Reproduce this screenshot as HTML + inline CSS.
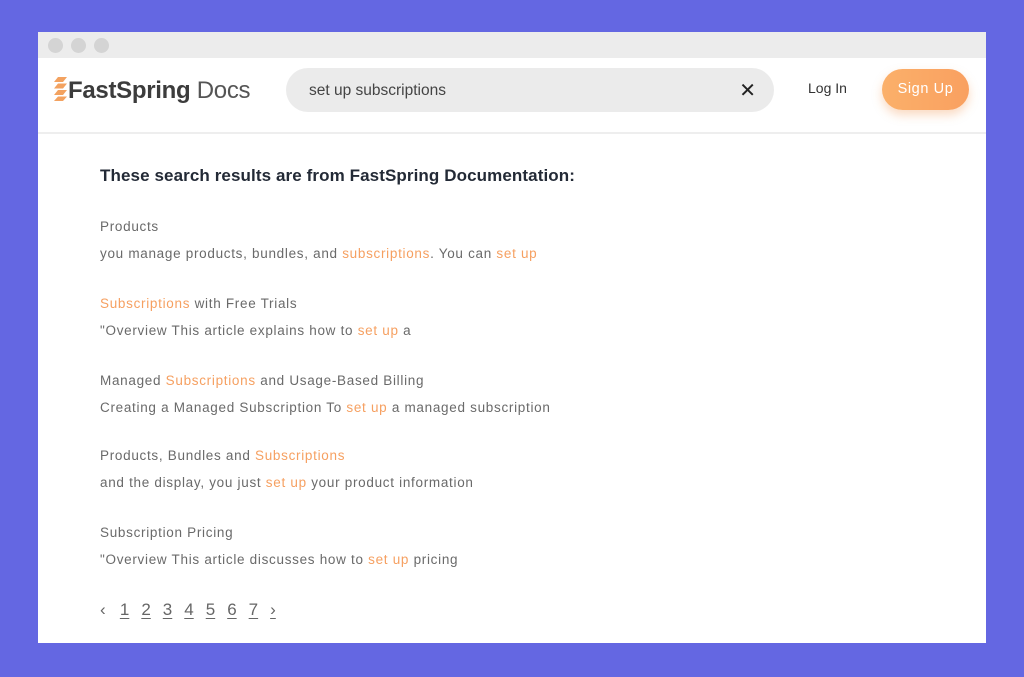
<!DOCTYPE html>
<html><head><meta charset="utf-8"><style>
*{margin:0;padding:0;box-sizing:border-box}
body{width:1024px;height:677px;background:#6467e2;font-family:"Liberation Sans",sans-serif;position:relative;overflow:hidden}
.win{position:absolute;left:38px;top:32px;width:948px;height:611px;background:#fff}
.tb{height:26px;background:#ececec;position:relative}
.dot{position:absolute;top:6px;width:15px;height:15px;border-radius:50%;background:#d4d4d4}
.hdr{height:76px;border-bottom:2px solid #eeeeee;position:relative;background:#fff}
.logo{position:absolute;left:16px;top:19px;font-size:24px;color:#3c3c3c;letter-spacing:-0.3px}
.logo b{font-weight:bold}
.logo span{font-weight:normal;color:#555}
.search{position:absolute;left:248px;top:10px;width:488px;height:44px;border-radius:22px;background:#ebebeb;font-size:15.5px;color:#444;padding:14px 0 0 23px}
.x{position:absolute;right:18px;top:10px;font-size:20px;color:#222}
.login{position:absolute;left:770px;top:22px;font-size:14px;color:#333}
.sign{position:absolute;left:844px;top:11px;width:87px;height:41px;border-radius:21px;background:linear-gradient(90deg,#fbb06a,#f9a060);color:#fff;font-size:14.5px;letter-spacing:.6px;text-align:center;line-height:41px;box-shadow:0 5px 10px rgba(240,150,80,.35)}
.c{position:absolute;left:62px;top:101px;color:#6a6a6a;font-size:13.5px;letter-spacing:.7px}
h1{font-size:17px;color:#232a36;font-weight:bold;position:absolute;top:0;white-space:nowrap;letter-spacing:.1px}
.t{position:absolute;white-space:nowrap}
.o{color:#f6a061}
.pg{position:absolute;font-size:17px;color:#666;white-space:nowrap;letter-spacing:0}
.pg u{margin-right:12px;text-underline-offset:3px}
</style></head><body>
<div class="win">
<div class="tb"><div class="dot" style="left:10px"></div><div class="dot" style="left:33px"></div><div class="dot" style="left:56px"></div></div>
<div class="hdr">
<div class="logo"><svg width="13" height="24" viewBox="0 0 13 24" style="vertical-align:-3px;margin-right:1px"><g fill="#f3a260"><path d="M4 0h9l-4 5H0z"/><path d="M4 6.5h9l-4 5H0z"/><path d="M4 13h9l-4 5H0z"/><path d="M4 19.5h9l-4 4.5H0z"/></g></svg><b>FastSpring</b> <span>Docs</span></div>
<div class="search">set up subscriptions<span class="x">✕</span></div>
<div class="login">Log In</div>
<div class="sign">Sign Up</div>
</div>
<div class="c">
<h1 style="top:33px">These search results are from FastSpring Documentation:</h1>
<div class="t" style="top:86px">Products</div>
<div class="t" style="top:113px">you manage products, bundles, and <span class="o">subscriptions</span>. You can <span class="o">set up</span></div>
<div class="t" style="top:163px"><span class="o">Subscriptions</span> with Free Trials</div>
<div class="t" style="top:190px">"Overview This article explains how to <span class="o">set up</span> a</div>
<div class="t" style="top:240px">Managed <span class="o">Subscriptions</span> and Usage-Based Billing</div>
<div class="t" style="top:267px">Creating a Managed Subscription To <span class="o">set up</span> a managed subscription</div>
<div class="t" style="top:315px">Products, Bundles and <span class="o">Subscriptions</span></div>
<div class="t" style="top:342px">and the display, you just <span class="o">set up</span> your product information</div>
<div class="t" style="top:392px">Subscription Pricing</div>
<div class="t" style="top:419px">"Overview This article discusses how to <span class="o">set up</span> pricing</div>
<div class="pg" style="top:467px">‹&nbsp;&nbsp; <u>1</u><u>2</u><u>3</u><u>4</u><u>5</u><u>6</u><u>7</u><u>›</u></div>
</div>
</div>
</body></html>
